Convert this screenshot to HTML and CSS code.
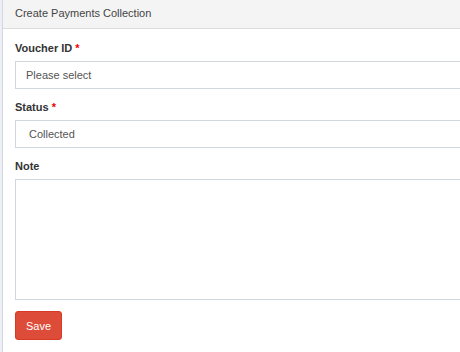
FILE: index.html
```html
<!DOCTYPE html>
<html lang="en">

<head>
    <meta charset="UTF-8">
    <meta name="viewport" content="width=device-width, initial-scale=1.0">
    <title>Create Payments Collection</title>
    <link rel="stylesheet" href="styles.css">
</head>

<body>
    <div class="page">
        <div class="box">
            <div class="box-header">
                <h3 class="box-title">Create Payments Collection</h3>
            </div>
            <form action="#" method="post" class="box-body">
                <div class="form-group">
                    <label for="voucher" class="required">Voucher ID</label>
                    <select name="voucher" id="voucher" class="form-control">
                        <option>Please select</option>
                    </select>
                </div>
                <div class="form-group">
                    <label for="status" class="required">Status</label>
                    <select name="status" id="status" class="form-control status">
                        <option>Collected</option>
                    </select>
                </div>
                <div class="form-group">
                    <label for="note">Note</label>
                    <textarea name="note" id="note" class="form-control note"></textarea>
                </div>
                <button type="submit" class="btn btn-danger">Save</button>
            </form>
        </div>
    </div>
</body>

</html>
```

FILE: styles.css
```css
* {
    margin: 0;
    padding: 0;
    box-sizing: border-box;
}

html,
body {
    height: 100%;
    overflow: hidden;
}

body {
    background-color: #ecf0f5;
    font-family: "Liberation Sans", Arial, sans-serif;
    font-size: 11px;
    color: #333;
}

.page {
    padding-left: 2px;
    height: 100%;
}

/* the panel runs on past the right edge of the window */
.box {
    height: 100%;
    background-color: #fff;
    border-left: 1px solid #d2d6de;
}

.box-header {
    height: 29px;
    padding: 6px 12px;
    background-color: #f4f4f4;
    border-bottom: 1px solid #dcdcdc;
}

.box-title {
    font-size: 11px;
    font-weight: normal;
    line-height: 15px;
    color: #444;
}

.box-body {
    padding: 12px 0 12px 12px;
}

.form-group {
    margin-bottom: 11px;
}

.form-group label {
    display: block;
    font-weight: bold;
    line-height: 15px;
    margin-bottom: 5px;
}

.form-group label.required::after {
    content: " *";
    color: #e00;
}

.form-control {
    display: block;
    width: 100%;
    height: 28px;
    padding: 0 10px;
    font-family: inherit;
    font-size: 11px;
    color: #555;
    background-color: #fff;
    border: 1px solid #d2d6de;
    border-right: none;
    border-radius: 0;
    outline: none;
    appearance: none;
}

.form-control.status {
    padding-left: 13px;
}

.form-control.note {
    height: 121px;
    padding: 6px 10px;
    resize: none;
}

.btn {
    display: inline-block;
    height: 29px;
    padding: 0 10px;
    font-family: inherit;
    font-size: 11px;
    color: #fff;
    border-radius: 3px;
    cursor: pointer;
}

.btn-danger {
    background-color: #dd4b39;
    border: 1px solid #d73925;
}
```
